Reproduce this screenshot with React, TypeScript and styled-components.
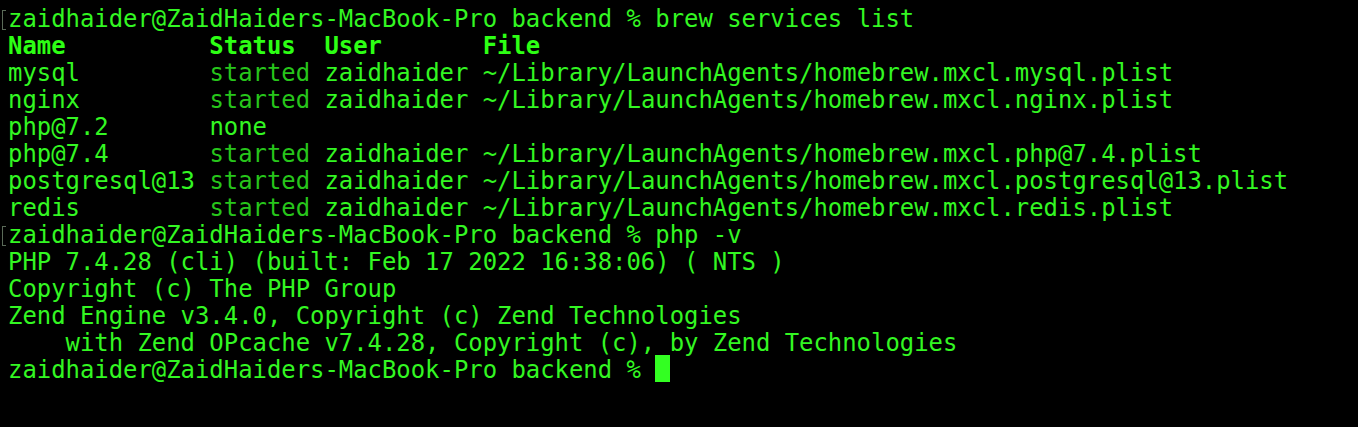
import React from "react";
import styled, { createGlobalStyle } from "styled-components";

const GlobalStyle = createGlobalStyle`
  html, body {
    margin: 0;
    padding: 0;
    background: #000;
  }
`;

const Screen = styled.div`
  width: 1358px;
  height: 427px;
  background: #000;
  padding: 4px 0 0 8px;
  box-sizing: border-box;
  font-family: "DejaVu Sans Mono", "Liberation Mono", monospace;
  font-size: 23.9px;
  line-height: 27px;
  color: #33f722;
  overflow: hidden;
`;

const Line = styled.div`
  position: relative;
  box-sizing: border-box;
  height: 27px;
  padding-top: 2px;
  white-space: pre;
`;

const Mark = styled.span`
  position: absolute;
  left: -6px;
  top: 6px;
  width: 3px;
  height: 18px;
  border: 1px solid #5a6a58;
  border-right: none;
`;

const Bold = styled.span`
  font-weight: bold;
  color: #2dff14;
`;

const Started = styled.span`
  color: #27c51b;
`;

const Cursor = styled.span`
  display: inline-block;
  width: 15px;
  height: 27px;
  margin-top: -2px;
  vertical-align: top;
  background: #33ff22;
`;

type Service = { name: string; status: string; file?: string };

const services: Service[] = [
  { name: "mysql", status: "started", file: "mysql" },
  { name: "nginx", status: "started", file: "nginx" },
  { name: "php@7.2", status: "none" },
  { name: "php@7.4", status: "started", file: "php@7.4" },
  { name: "postgresql@13", status: "started", file: "postgresql@13" },
  { name: "redis", status: "started", file: "redis" },
];

const prompt = "zaidhaider@ZaidHaiders-MacBook-Pro backend % ";

const App = () => {
  return (
    <Screen>
      <GlobalStyle />
      <Line>
        <Mark />
        {prompt}brew services list
      </Line>
      <Line>
        <Bold>{"Name          Status  User       File"}</Bold>
      </Line>
      {services.map((s) => (
        <Line key={s.name}>
          {s.name.padEnd(14)}
          {s.status === "started" ? (
            <>
              <Started>started</Started>
              {` zaidhaider ~/Library/LaunchAgents/homebrew.mxcl.${s.file}.plist`}
            </>
          ) : (
            s.status
          )}
        </Line>
      ))}
      <Line>
        <Mark />
        {prompt}php -v
      </Line>
      <Line>PHP 7.4.28 (cli) (built: Feb 17 2022 16:38:06) ( NTS )</Line>
      <Line>Copyright (c) The PHP Group</Line>
      <Line>Zend Engine v3.4.0, Copyright (c) Zend Technologies</Line>
      <Line>{"    with Zend OPcache v7.4.28, Copyright (c), by Zend Technologies"}</Line>
      <Line>
        {prompt}
        <Cursor />
      </Line>
    </Screen>
  );
};

export default App;
